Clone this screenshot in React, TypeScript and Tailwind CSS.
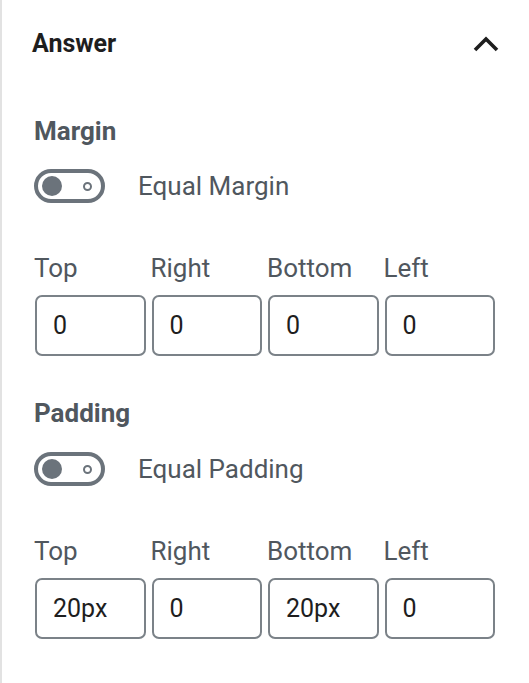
import React from "react";

function Toggle() {
  return (
    <div className="relative w-[71px] h-[34px] rounded-full border-4 border-[#6b737b] shrink-0">
      <div className="absolute left-[4px] top-[3px] w-[20px] h-[20px] rounded-full bg-[#6b737b]" />
      <div className="absolute right-[9px] top-[8.5px] w-[9px] h-[9px] rounded-full border-[2.5px] border-[#6b737b]" />
    </div>
  );
}

function Inputs({ values }: { values: string[] }) {
  const labels = ["Top", "Right", "Bottom", "Left"];
  return (
    <div className="grid grid-cols-4 gap-x-[6px] w-[460px] ml-[33px]">
      {labels.map((l) => (
        <div key={l} className="text-[26px] leading-[30px] text-[#50575e] -ml-[1px]">{l}</div>
      ))}
      {values.map((v, i) => (
        <div
          key={i}
          className="mt-[12px] h-[61px] rounded-[7px] border-2 border-[#7b8288] flex items-center pl-[16px] text-[25px] text-[#1e1e1e]"
        >
          {v}
        </div>
      ))}
    </div>
  );
}

export default function App() {
  return (
    <div
      className="w-[529px] h-[683px] bg-white border-l-2 border-[#e2e2e2] overflow-hidden"
      style={{ fontFamily: "Roboto, 'Noto Sans', sans-serif" }}
    >
      <div className="flex items-center justify-between pl-[30px] pr-[30px] pt-[28px]">
        <div className="text-[25px] leading-[32px] font-bold text-[#1e1e1e]">Answer</div>
        <svg width="28" height="18" viewBox="0 0 28 18" className="mr-[-1px] -mt-[1px]">
          <path d="M3 15 L14 4 L25 15" fill="none" stroke="#1e1e1e" strokeWidth="3.6" />
        </svg>
      </div>

      <div className="pl-[32px] mt-[55px] text-[26px] leading-[32px] font-bold text-[#50575e]">Margin</div>
      <div className="flex items-center ml-[32px] mt-[22px] gap-[33px]">
        <Toggle />
        <span className="text-[26px] leading-[32px] text-[#50575e]">Equal Margin</span>
      </div>
      <div className="mt-[50px]">
        <Inputs values={["0", "0", "0", "0"]} />
      </div>

      <div className="pl-[32px] mt-[41px] text-[26px] leading-[32px] font-bold text-[#50575e]">Padding</div>
      <div className="flex items-center ml-[32px] mt-[23px] gap-[33px]">
        <Toggle />
        <span className="text-[26px] leading-[32px] text-[#50575e]">Equal Padding</span>
      </div>
      <div className="mt-[50px]">
        <Inputs values={["20px", "0", "20px", "0"]} />
      </div>
    </div>
  );
}
